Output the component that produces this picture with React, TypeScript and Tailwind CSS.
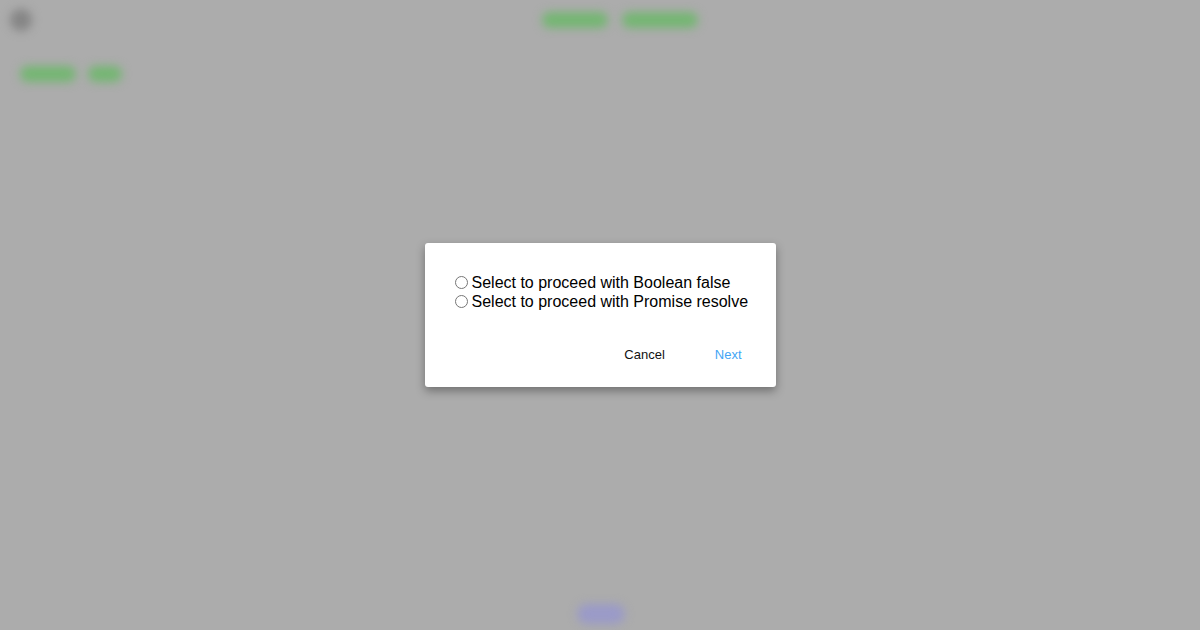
import { useState } from 'react';

type Choice = 'false' | 'resolve' | null;

export default function App() {
  const [choice, setChoice] = useState<Choice>(null);

  return (
    <div className="relative h-[630px] w-[1200px] overflow-hidden bg-[#acacac] font-['Liberation_Sans',Arial,sans-serif]">
      {/* Blurred page behind the backdrop */}
      <div className="flex h-full flex-col blur-[5px]">
        <div className="flex h-[40px] items-center px-[10px]">
          <div className="h-[22px] w-[22px] rounded-full bg-[#858585]" />
          <div className="ml-[510px] flex gap-[14px]">
            <div className="h-[16px] w-[66px] rounded-full bg-[#74b672]" />
            <div className="h-[16px] w-[76px] rounded-full bg-[#74b672]" />
          </div>
        </div>
        <div className="mt-[26px] flex gap-[12px] px-[20px]">
          <div className="h-[16px] w-[56px] rounded-full bg-[#74b672]" />
          <div className="h-[16px] w-[34px] rounded-full bg-[#74b672]" />
        </div>
        <div className="mt-auto mb-[6px] flex justify-center">
          <div className="ml-[2px] h-[20px] w-[48px] rounded-full bg-[#9a9ac8]" />
        </div>
      </div>

      {/* Dialog */}
      <div className="absolute inset-0 flex items-center justify-center">
        <div className="w-[351px] rounded-[3px] bg-white shadow-[0_4px_10px_rgba(0,0,0,0.35)]">
          <div className="flex flex-col whitespace-nowrap pl-[30px] pt-[30px] text-[16px] leading-[19px] text-black">
            <label className="flex items-center">
              <input
                type="radio"
                name="proceed"
                checked={choice === 'false'}
                onChange={() => setChoice('false')}
                className="mr-[4px] ml-0 h-[13px] w-[13px]"
              />
              Select to proceed with Boolean false
            </label>
            <label className="flex items-center">
              <input
                type="radio"
                name="proceed"
                checked={choice === 'resolve'}
                onChange={() => setChoice('resolve')}
                className="mr-[4px] ml-0 h-[13px] w-[13px]"
              />
              Select to proceed with Promise resolve
            </label>
          </div>
          <div className="flex justify-end gap-[18px] px-[18px] pt-[26px] pb-[14px] text-[13px]">
            <button className="h-[36px] px-[16px] text-[#111]">Cancel</button>
            <button className="h-[36px] px-[16px] text-[#42a5f5]">Next</button>
          </div>
        </div>
      </div>
    </div>
  );
}
